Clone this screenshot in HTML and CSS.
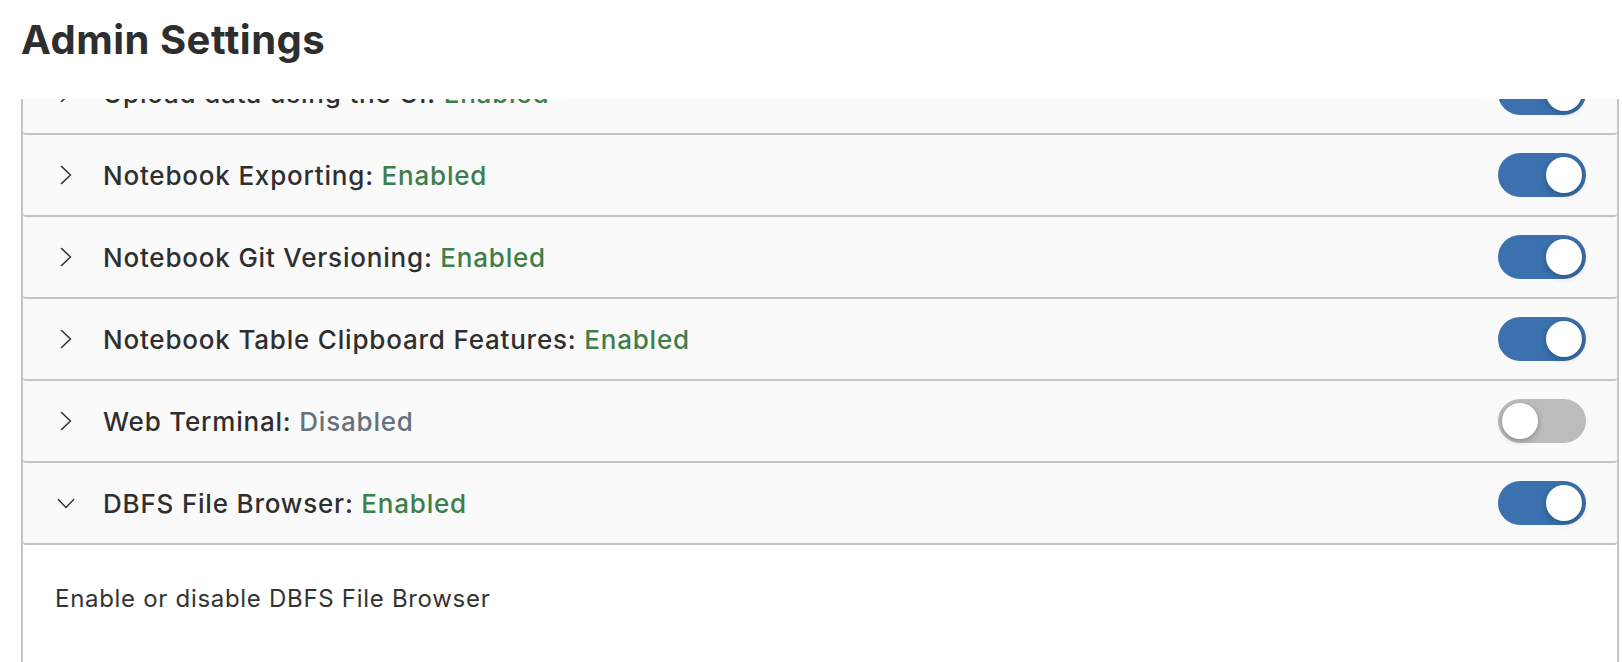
FILE: index.html
```html
<!DOCTYPE html>
<html>
<head>
<meta charset="utf-8">
<link rel="stylesheet" href="styles.css">
</head>
<body>
<header class="page-header">
  <h1 class="page-title">Admin Settings</h1>
</header>
<div class="panel">
  <div class="list">
    <div class="row">
      <svg class="chev" viewBox="0 0 12 20"><path d="M1.5 1.5 L10.5 10 L1.5 18.5"/></svg>
      <span class="label">Upload data using the UI: <span class="on">Enabled</span></span>
      <span class="toggle is-on"><span class="knob"></span></span>
    </div>
    <div class="row">
      <svg class="chev" viewBox="0 0 12 20"><path d="M1.5 1.5 L10.5 10 L1.5 18.5"/></svg>
      <span class="label">Notebook Exporting: <span class="on">Enabled</span></span>
      <span class="toggle is-on"><span class="knob"></span></span>
    </div>
    <div class="row">
      <svg class="chev" viewBox="0 0 12 20"><path d="M1.5 1.5 L10.5 10 L1.5 18.5"/></svg>
      <span class="label">Notebook Git Versioning: <span class="on">Enabled</span></span>
      <span class="toggle is-on"><span class="knob"></span></span>
    </div>
    <div class="row">
      <svg class="chev" viewBox="0 0 12 20"><path d="M1.5 1.5 L10.5 10 L1.5 18.5"/></svg>
      <span class="label">Notebook Table Clipboard Features: <span class="on">Enabled</span></span>
      <span class="toggle is-on"><span class="knob"></span></span>
    </div>
    <div class="row">
      <svg class="chev" viewBox="0 0 12 20"><path d="M1.5 1.5 L10.5 10 L1.5 18.5"/></svg>
      <span class="label">Web Terminal: <span class="off">Disabled</span></span>
      <span class="toggle"><span class="knob"></span></span>
    </div>
    <div class="row">
      <svg class="chev down" viewBox="0 0 20 12"><path d="M1.5 1.5 L10 10.5 L18.5 1.5"/></svg>
      <span class="label">DBFS File Browser: <span class="on">Enabled</span></span>
      <span class="toggle is-on"><span class="knob"></span></span>
    </div>
    <div class="details">
      <p class="desc">Enable or disable DBFS File Browser</p>
    </div>
  </div>
</div>
</body>
</html>
```
FILE: styles.css
```css
html, body {
  margin: 0;
  padding: 0;
  background: #ffffff;
  font-family: Inter, "Noto Sans", "Liberation Sans", sans-serif;
  color: #2f2f2f;
  overflow: hidden;
}
.page-header {
  height: 99px;
  box-sizing: border-box;
  padding: 15px 0 0 21px;
}
.page-title {
  margin: 0;
  font-size: 40px;
  font-weight: 700;
  line-height: 50px;
  color: #2e2e2e;
  letter-spacing: 0.5px;
}
.panel {
  margin: 0 3px 0 21px;
  height: 563px;
  overflow: hidden;
  border-left: 2px solid #c4c4c4;
  border-right: 2px solid #c4c4c4;
}
.list {
  margin-top: -46px;
}
.row {
  height: 80px;
  display: flex;
  align-items: center;
  background: #fafafa;
  border-bottom: 2px solid #c4c4c4;
  border-radius: 0 0 3px 3px;
  padding: 0 31px 0 37px;
}
.chev {
  width: 12px;
  height: 20px;
  flex: none;
  fill: none;
  stroke: #333;
  stroke-width: 1.6;
  stroke-linecap: round;
  stroke-linejoin: round;
  margin-right: 31px;
}
.chev.down {
  width: 18px;
  height: 11px;
  margin-left: -3px;
  margin-right: 28px;
}
.label {
  flex: 1;
  font-size: 26px;
  font-weight: 500;
  letter-spacing: 0.8px;
  color: #2f2f2f;
  white-space: nowrap;
}
.on {
  color: #3e7e4b;
  font-weight: 500;
}
.off {
  color: #66717d;
  font-weight: 500;
}
.toggle {
  position: relative;
  width: 88px;
  height: 44px;
  border-radius: 22px;
  background: #bcbcbc;
  flex: none;
}
.toggle.is-on {
  background: #3a71ae;
}
.knob {
  position: absolute;
  top: 4px;
  left: 4px;
  width: 36px;
  height: 36px;
  border-radius: 50%;
  background: #ffffff;
  box-shadow: 0 2px 6px rgba(0, 0, 0, 0.28);
}
.toggle.is-on .knob {
  left: 48px;
}
.details {
  padding: 20px 32px 40px 32px;
  background: #ffffff;
}
.desc {
  margin: 0;
  font-size: 24px;
  line-height: 68px;
  letter-spacing: 0.7px;
  color: #333;
}
```
